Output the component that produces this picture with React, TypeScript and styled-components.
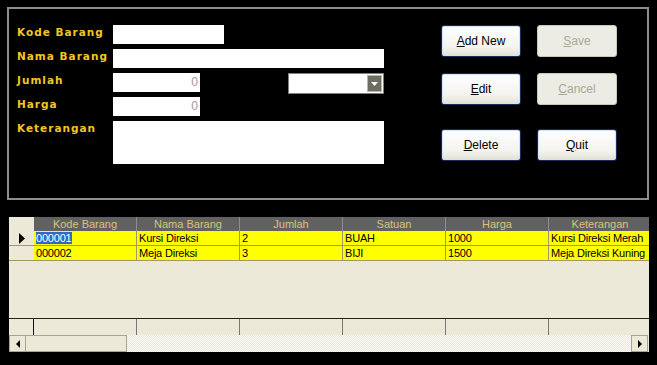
import React from 'react';
import styled, {createGlobalStyle} from 'styled-components';

const GlobalStyle = createGlobalStyle`
  html, body {
    margin: 0;
    padding: 0;
    background: #000;
  }
  body {
    font-family: "Liberation Sans", Arial, sans-serif;
  }
`;

const Page = styled.div`
  width: 657px;
  height: 365px;
  background: #000;
  padding: 7px 0 0 7px;
  box-sizing: border-box;
  overflow: hidden;
`;

const Frame = styled.div`
  width: 642px;
  height: 193px;
  box-sizing: border-box;
  border: 2px solid #8e8e8e;
  display: flex;
  padding: 16px 0 0 8px;
`;

const Form = styled.div`
  display: grid;
  grid-template-columns: 96px 271px;
  grid-auto-rows: 19px;
  row-gap: 5px;
`;

const Label = styled.div`
  font-family: "DejaVu Sans", Verdana, sans-serif;
  font-weight: 700;
  font-size: 10.5px;
  letter-spacing: 1px;
  color: #f3c623;
  line-height: 15px;
`;

const FieldRow = styled.div`
  display: flex;
  justify-content: space-between;
  align-items: flex-start;
`;

const TextBox = styled.div<{$w: number; $h?: number}>`
  width: ${({$w}) => $w}px;
  height: ${({$h}) => $h ?? 19}px;
  background: #fff;
  box-sizing: border-box;
  padding: 0 2px;
  font-family: "Liberation Sans", Arial, sans-serif;
  font-size: 12px;
  line-height: 19px;
  color: #9a9a9a;
  text-align: right;
`;

const Combo = styled.div`
  width: 96px;
  height: 21px;
  background: #fff;
  border: 1px solid #7f7f7f;
  box-sizing: border-box;
  display: flex;
  justify-content: flex-end;
  padding: 1px;
`;

const ComboButton = styled.div`
  width: 15px;
  background: #6d6d62;
  border: 1px solid #b8b8ac;
  box-sizing: border-box;
  display: flex;
  align-items: center;
  justify-content: center;
`;

const Buttons = styled.div`
  margin-left: 57px;
  display: flex;
  flex-direction: column;
`;

const ButtonRow = styled.div<{$top: number}>`
  display: flex;
  gap: 16px;
  margin-top: ${({$top}) => $top}px;
`;

const Button = styled.div<{$disabled?: boolean}>`
  width: 80px;
  height: 32px;
  box-sizing: border-box;
  border-radius: 3px;
  border: 1px solid ${({$disabled}) => ($disabled ? '#c9c7ba' : '#1b2a58')};
  background: ${({$disabled}) =>
    $disabled ? '#ecebe4' : 'linear-gradient(#ffffff, #f4f3ee 70%, #e3e0d4)'};
  box-shadow: ${({$disabled}) => ($disabled ? 'none' : 'inset 0 0 0 1px #cfe2f8')};
  color: ${({$disabled}) => ($disabled ? '#aca899' : '#000')};
  font-family: "Liberation Sans", Arial, sans-serif;
  font-size: 12px;
  display: flex;
  align-items: center;
  justify-content: center;
  & u {
    text-decoration: underline;
  }
`;

const Grid = styled.div`
  margin: 17px 0 0 2px;
  width: 640px;
  height: 135px;
  background: #ece9d8;
  display: flex;
  flex-direction: column;
  overflow: hidden;
  font-family: "Liberation Sans", Arial, sans-serif;
  font-size: 11px;
`;

const Row = styled.div<{$h: number}>`
  display: flex;
  height: ${({$h}) => $h}px;
  flex-shrink: 0;
`;

const Indicator = styled.div<{$line?: string}>`
  width: 25px;
  flex-shrink: 0;
  box-sizing: border-box;
  background: #ece9d8;
  border-bottom: 1px solid ${({$line}) => $line ?? '#ece9d8'};
  display: flex;
  align-items: center;
  justify-content: center;
`;

const HeadCell = styled.div`
  width: 103px;
  flex-shrink: 0;
  box-sizing: border-box;
  background: #616161;
  color: #d9c377;
  border-right: 1px solid #8d8d8d;
  text-align: center;
  line-height: 14px;
  white-space: nowrap;
  overflow: hidden;
`;

const Cell = styled.div<{$selected?: boolean}>`
  width: 103px;
  flex-shrink: 0;
  box-sizing: border-box;
  background: #ffff00;
  border-right: 1px solid #a09a60;
  border-bottom: 1px solid #a09a60;
  padding-left: 2px;
  line-height: 15px;
  letter-spacing: -0.2px;
  white-space: nowrap;
  overflow: hidden;
  color: #000;
  & span {
    background: ${({$selected}) => ($selected ? '#3169c6' : 'transparent')};
    color: ${({$selected}) => ($selected ? '#fff' : '#000')};
  }
`;

const Empty = styled.div`
  flex: 1;
`;

const FootRow = styled.div`
  display: flex;
  height: 16px;
  border-top: 1px solid #222;
  flex-shrink: 0;
`;

const FootCell = styled.div<{$w: number; $dark?: boolean}>`
  width: ${({$w}) => $w}px;
  flex-shrink: 0;
  box-sizing: border-box;
  border-right: 1px solid ${({$dark}) => ($dark ? '#111' : '#777')};
`;

const ScrollBar = styled.div`
  display: flex;
  height: 17px;
  flex-shrink: 0;
  width: 639px;
  background-color: #f6f5ef;
  background-image: repeating-conic-gradient(#ece9d8 0 25%, #fbfaf5 0 50%);
  background-size: 2px 2px;
`;

const ScrollBtn = styled.div`
  width: 17px;
  box-sizing: border-box;
  border: 1px solid #a8a596;
  background: #ece9d8;
  display: flex;
  align-items: center;
  justify-content: center;
`;

const Thumb = styled.div`
  width: 101px;
  box-sizing: border-box;
  border: 1px solid #a8a596;
  border-left: none;
  background: #ece9d8;
`;

const Track = styled.div`
  flex: 1;
`;

const columns = ['Kode Barang', 'Nama Barang', 'Jumlah', 'Satuan', 'Harga', 'Keterangan'];
const data = [
  ['000001', 'Kursi Direksi', '2', 'BUAH', '1000', 'Kursi Direksi Merah'],
  ['000002', 'Meja Direksi', '3', 'BIJI', '1500', 'Meja Direksi Kuning'],
];

const Arrow = ({dir}: {dir: 'left' | 'right' | 'down' | 'row'}) => {
  if (dir === 'down') {
    return (
      <svg width="7" height="4" viewBox="0 0 7 4">
        <path d="M0 0h7L3.5 4z" fill="#fff" />
      </svg>
    );
  }
  if (dir === 'row') {
    return (
      <svg width="6" height="11" viewBox="0 0 6 11">
        <path d="M0 0v11L6 5.5z" fill="#000" />
      </svg>
    );
  }
  return (
    <svg width="4" height="8" viewBox="0 0 4 8">
      <path d={dir === 'left' ? 'M4 0v8L0 4z' : 'M0 0v8L4 4z'} fill="#000" />
    </svg>
  );
};

const App: React.FC = () => {
  return (
    <>
      <GlobalStyle />
      <Page>
        <Frame>
          <Form>
            <Label>Kode Barang</Label>
            <div>
              <TextBox $w={111} />
            </div>
            <Label>Nama Barang</Label>
            <TextBox $w={271} />
            <Label>Jumlah</Label>
            <FieldRow>
              <TextBox $w={87}>0</TextBox>
              <Combo>
                <ComboButton>
                  <Arrow dir="down" />
                </ComboButton>
              </Combo>
            </FieldRow>
            <Label>Harga</Label>
            <div>
              <TextBox $w={87}>0</TextBox>
            </div>
            <Label>Keterangan</Label>
            <TextBox $w={271} $h={43} />
          </Form>
          <Buttons>
            <ButtonRow $top={0}>
              <Button>
                <span><u>A</u>dd New</span>
              </Button>
              <Button $disabled>
                <span><u>S</u>ave</span>
              </Button>
            </ButtonRow>
            <ButtonRow $top={16}>
              <Button>
                <span><u>E</u>dit</span>
              </Button>
              <Button $disabled>
                <span><u>C</u>ancel</span>
              </Button>
            </ButtonRow>
            <ButtonRow $top={24}>
              <Button>
                <span><u>D</u>elete</span>
              </Button>
              <Button>
                <span><u>Q</u>uit</span>
              </Button>
            </ButtonRow>
          </Buttons>
        </Frame>
        <Grid>
          <Row $h={14}>
            <Indicator />
            {columns.map((c) => (
              <HeadCell key={c}>{c}</HeadCell>
            ))}
          </Row>
          {data.map((r, i) => (
            <Row $h={15} key={r[0]}>
              <Indicator $line="#a09a60">{i === 0 && <Arrow dir="row" />}</Indicator>
              {r.map((v, j) => (
                <Cell key={j} $selected={i === 0 && j === 0}>
                  <span>{v}</span>
                </Cell>
              ))}
            </Row>
          ))}
          <Empty />
          <FootRow>
            <FootCell $w={25} $dark />
            {columns.map((c) => (
              <FootCell key={c} $w={103} />
            ))}
          </FootRow>
          <ScrollBar>
            <ScrollBtn>
              <Arrow dir="left" />
            </ScrollBtn>
            <Thumb />
            <Track />
            <ScrollBtn>
              <Arrow dir="right" />
            </ScrollBtn>
          </ScrollBar>
        </Grid>
      </Page>
    </>
  );
};

export default App;
